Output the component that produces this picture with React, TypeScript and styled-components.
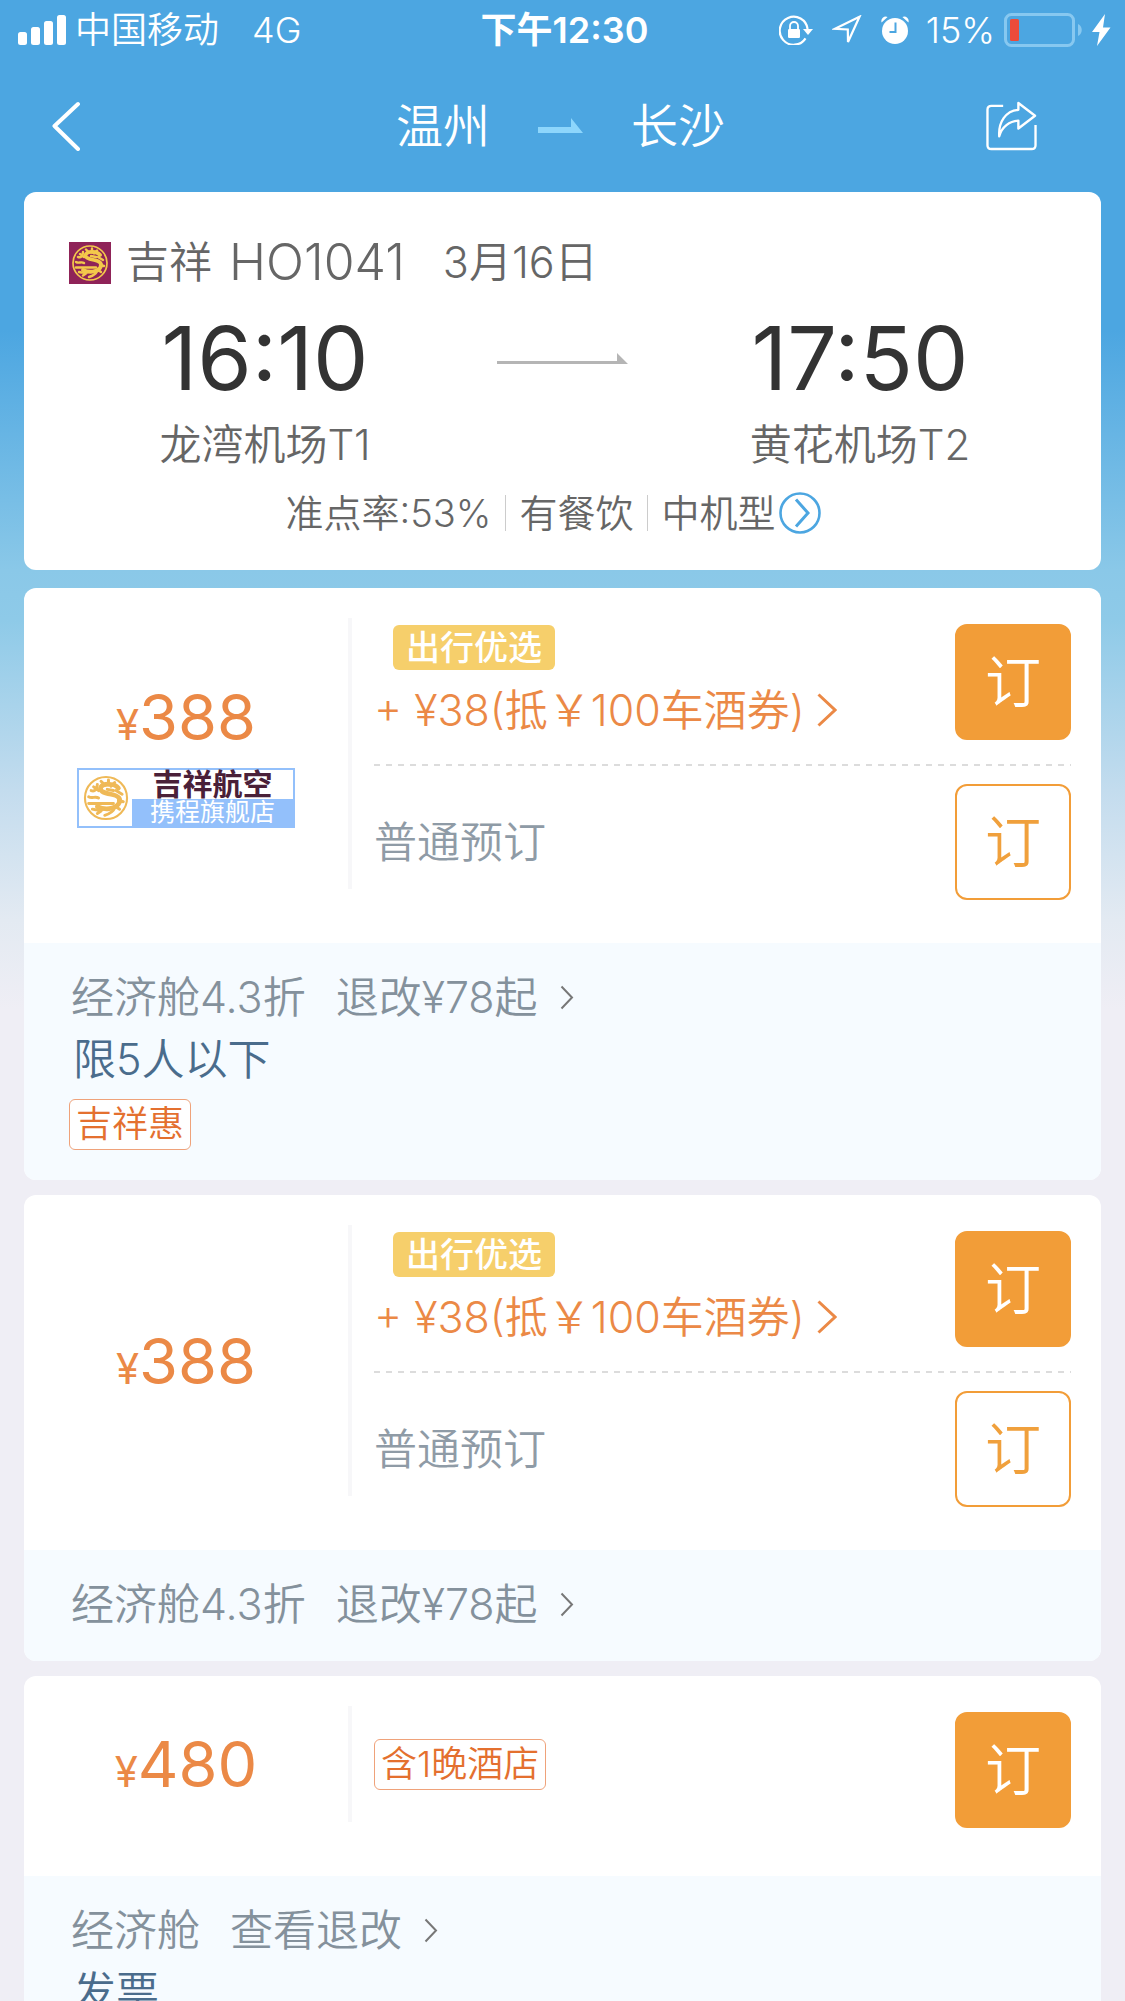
import React from "react";
import styled, { createGlobalStyle } from "styled-components";

const GlobalStyle = createGlobalStyle`
  * { box-sizing: border-box; }
  body {
    margin: 0;
    background: #efeef5;
    font-family: Inter, "Noto Sans CJK SC", sans-serif;
    font-weight: 350;
    -webkit-font-smoothing: antialiased;
  }
  button { font: inherit; padding: 0; cursor: pointer; }
  a { text-decoration: none; color: inherit; }
`;

const Page = styled.div`
  min-height: 100vh;
  padding-bottom: 15px;
  background: #efeef5 linear-gradient(
    180deg,
    #4ca6e1 0px, #4ca6e1 330px, #8ac8e8 570px, #8ecae8 620px,
    #c3dcee 790px, #e3eaf2 920px, #efeef5 1010px
  ) no-repeat;
`;

const StatusBar = styled.div`
  display: grid;
  grid-template-columns: 1fr auto 1fr;
  align-items: center;
  height: 60px;
  padding: 0 14px 0 18px;
  color: #fff;
  font-size: 36px;
  line-height: 60px;
`;

const StatusSide = styled.div<{ $end?: boolean }>`
  display: flex;
  align-items: center;
  justify-content: ${(p) => (p.$end ? "flex-end" : "flex-start")};
  gap: 9px;
`;

const Network = styled.span`
  margin-left: 24px;
`;

const Clock = styled.span`
  font-weight: 600;
`;

const StatusIcons = styled.div`
  display: flex;
  align-items: center;
  gap: 19px;
  margin-right: 8px;
`;

const Header = styled.header`
  display: grid;
  grid-template-columns: 1fr auto 1fr;
  align-items: center;
  height: 132px;
  padding: 0 52px 0 48px;
  color: #fff;
`;

const IconButton = styled.button<{ $end?: boolean }>`
  display: flex;
  justify-self: ${(p) => (p.$end ? "end" : "start")};
  margin-right: ${(p) => (p.$end ? "36px" : "0")};
  border: 0;
  background: none;
  color: inherit;
`;

const Route = styled.h1`
  display: flex;
  align-items: center;
  gap: 48px;
  margin: 0;
  font-size: 47px;
  font-weight: 350;
  line-height: 60px;
`;

const Stack = styled.main`
  display: flex;
  flex-direction: column;
  gap: 15px;
  padding: 0 24px;
`;

const Card = styled.section`
  overflow: hidden;
  border-radius: 12px;
  background: #fff;
`;

const FlightCard = styled(Card)`
  margin-bottom: 3px;
  padding: 40px 45px 30px;
  color: #666;
`;

const FlightName = styled.div`
  display: flex;
  align-items: flex-start;
  height: 60px;
  font-size: 43px;
  line-height: 60px;

  svg { margin-top: 10px; }
`;

const Airline = styled.span`
  margin-left: 15px;
`;

const FlightNumber = styled.span`
  margin: 0 38px 0 17px;
  font-size: 50px;
`;

const Times = styled.div`
  display: grid;
  grid-template-columns: 1fr 131px 1fr;
  gap: 36px;
  padding-top: 6px;
`;

const Stop = styled.div`
  display: flex;
  flex-direction: column;
  align-items: center;
`;

const ArrowCell = styled.div`
  padding-top: 50px;
`;

const Time = styled.span`
  color: #333;
  font-size: 88px;
  font-weight: 400;
  line-height: 120px;
`;

const Airport = styled.span`
  font-size: 42px;
  line-height: 54px;
`;

const Facts = styled.div`
  display: flex;
  align-items: center;
  justify-content: center;
  margin-top: 14px;
  padding-right: 32px;
  font-size: 38px;
  line-height: 54px;
`;

const Fact = styled.span`
  padding: 0 14px;

  & + & {
    background: linear-gradient(#ccc, #ccc) left center / 1px 36px no-repeat;
  }
  &:last-of-type { padding-right: 4px; }
`;

const Upper = styled.div`
  display: grid;
  grid-template-columns: 324px 4px 1fr;
  min-height: 200px;
`;

const PriceColumn = styled.div`
  display: flex;
  flex-direction: column;
  align-items: center;
  justify-content: center;
  gap: 14px;
  padding: 30px 0 54px;
`;

const Price = styled.div`
  color: #eb8946;
  font-size: 63px;
  font-weight: 400;
  line-height: 74px;
`;

const Yen = styled.span`
  font-size: 42px;
  line-height: 1;
`;

const Divider = styled.div`
  margin: 30px 0 54px;
  background: #f7f7f9;
`;

const Store = styled.div`
  display: grid;
  grid-template-columns: 53px 1fr;
  width: 218px;
  height: 60px;
  border: 2px solid #93c0fb;
  background: #fff;
`;

const StoreMark = styled.div`
  display: flex;
  align-items: center;
  justify-content: center;
`;

const StoreText = styled.div`
  display: grid;
  grid-template-rows: 29px 27px;
  text-align: center;
`;

const StoreName = styled.span`
  color: #4a2038;
  font-size: 30px;
  font-weight: 700;
  line-height: 28px;
`;

const StoreKind = styled.span`
  background: #93c0fb;
  color: #fff;
  font-size: 25px;
  font-weight: 400;
  line-height: 26px;
`;

const Options = styled.div`
  padding: 36px 30px 43px 22px;
`;

const Option = styled.div`
  display: flex;
  align-items: center;
  justify-content: space-between;
  height: 116px;

  & + & {
    height: 136px;
    margin-top: 24px;
    padding-top: 20px;
    background: repeating-linear-gradient(90deg, #dcdcdc 0 6px, transparent 6px 12px) top / 100% 2px no-repeat;
  }
`;

const Offer = styled.div`
  display: flex;
  flex-direction: column;
  align-items: flex-start;
  align-self: flex-start;
  gap: 10px;
`;

const HotelOffer = styled.div`
  display: flex;
  align-items: center;
  align-self: flex-start;
  height: 104px;
`;

const Badge = styled.span`
  margin: 1px 0 0 19px;
  padding: 0 13px;
  border-radius: 6px;
  background: #f6cf6b;
  color: #fff;
  font-size: 34px;
  font-weight: 500;
  line-height: 45px;
`;

const Coupon = styled.a`
  display: flex;
  align-items: center;
  gap: 12px;
  color: #eb8946;
  font-size: 43px;
  line-height: 60px;
  white-space: pre;
`;

const Normal = styled.span`
  color: #8f9ba6;
  font-size: 43px;
  line-height: 60px;
`;

const Book = styled.button<{ $outline?: boolean }>`
  width: 116px;
  height: 116px;
  flex: none;
  border: 2px solid #f29d38;
  border-radius: 12px;
  background: ${(p) => (p.$outline ? "#fff" : "#f29d38")};
  color: ${(p) => (p.$outline ? "#f0a03c" : "#fff")};
  font-size: 56px;
  line-height: 112px;
`;

const Tag = styled.span`
  padding: 0 6px;
  border: 1px solid #efa27a;
  border-radius: 6px;
  background: #fff;
  color: #e4702f;
  font-size: 36px;
  line-height: 49px;
`;

const Lower = styled.div`
  display: flex;
  flex-direction: column;
  align-items: flex-start;
  padding: 23px 45px 26px;
  background: #f6fbff;
`;

const Terms = styled.a`
  display: flex;
  align-items: center;
  padding-left: 2px;
  color: #84919c;
  font-size: 43px;
  line-height: 62px;
`;

const TermsRule = styled.span`
  margin: 0 22px 0 30px;
`;

const Note = styled.span`
  padding-left: 4px;
  color: #4a6c8c;
  font-size: 43px;
  line-height: 62px;
`;

const NoteTags = styled.div`
  display: flex;
  margin: 9px 0 4px;
`;

const SignalIcon = () => (
  <svg width="48" height="30" viewBox="0 0 48 30" fill="#fff">
    <rect x="0" y="17" width="9" height="13" rx="2.5" />
    <rect x="13" y="12" width="9" height="18" rx="2.5" />
    <rect x="26" y="6" width="9" height="24" rx="2.5" />
    <rect x="39" y="0" width="9" height="30" rx="2.5" />
  </svg>
);

const LockIcon = () => (
  <svg width="34" height="30" viewBox="0 0 34 30" fill="none">
    <path d="M26.5 23.3A14 14 0 1 1 28.6 14" stroke="#fff" strokeWidth="2.2" />
    <path d="M24 14h10l-5 6z" fill="#fff" />
    <rect x="9" y="14" width="12" height="9" rx="1.2" fill="#fff" />
    <path d="M11 15v-4a4 4 0 0 1 8 0v4" stroke="#fff" strokeWidth="1.8" />
  </svg>
);

const LocationIcon = () => (
  <svg width="30" height="30" viewBox="0 0 30 30" fill="none">
    <path d="M27.5 1.8 3 13.8l12.800.7L16 27z" stroke="#fff" strokeWidth="2.2" />
  </svg>
);

const AlarmIcon = () => (
  <svg width="28" height="28" viewBox="0 0 28 28" fill="none">
    <circle cx="14" cy="15" r="13" fill="#fff" />
    <path d="M.6 6.5a4.5 4.5 0 0 1 6-5.6zM27.4 6.5a4.5 4.5 0 0 0-6-5.6z" fill="#fff" />
    <path d="M14.5 6.5V16H8.500" stroke="#4ca6e1" strokeWidth="2" />
  </svg>
);

const BatteryIcon = () => (
  <svg width="79" height="34" viewBox="0 0 79 34" fill="none">
    <rect x="1.500" y="1.500" width="68" height="31" rx="6" stroke="#87c8f0" strokeWidth="3" />
    <rect x="6" y="6" width="9" height="22" rx="1.500" fill="#ec4b3a" />
    <path d="M74 11v12c5-2 5-10 0-12z" fill="#87c8f0" />
  </svg>
);

const BoltIcon = () => (
  <svg width="19" height="32" viewBox="0 0 19 32" fill="#fff">
    <path d="M13 0 0 18h7.500L5 32l13.500-18.500H11z" />
  </svg>
);

const BackIcon = () => (
  <svg width="34" height="50" viewBox="0 0 34 50" fill="none" stroke="#fff" strokeWidth="4" strokeLinecap="round" strokeLinejoin="round">
    <path d="M30 3 6.500 25 30 48" />
  </svg>
);

const ShareIcon = () => (
  <svg width="51" height="50" viewBox="0 0 52 50" fill="none" stroke="#fff" strokeWidth="2.400" strokeLinejoin="round">
    <path d="M17.500 4.500H5.500Q1.500 4.500 1.500 8.500v36q0 4 4 4h41q4 0 4-4V24" />
    <path d="M33 1.500 50 14.500 33 27.500V19.500C24 20 16 26 13.500 35.500 12.500 21 20 9.500 33 8.500z" />
  </svg>
);

const HeaderArrow = () => (
  <svg width="45" height="16" viewBox="0 0 45 16" fill="#8dd6fc">
    <path d="M0 9h33V0l12 15H0z" />
  </svg>
);

const FlightArrow = () => (
  <svg width="131" height="11" viewBox="0 0 131 11" fill="#b5b5b5">
    <path d="M0 8h120V0l11 11H0z" />
  </svg>
);

const CircleChevron = () => (
  <svg width="42" height="42" viewBox="0 0 42 42" fill="none" stroke="#4ca6e1">
    <circle cx="21" cy="21" r="19.500" strokeWidth="2.600" />
    <path d="M17 7.500 29 21 17 34.500" strokeWidth="3" />
  </svg>
);

const Chevron = ({ w, h, stroke, weight }: { w: number; h: number; stroke: string; weight: number }) => (
  <svg width={w} height={h} viewBox={`0 0 ${w} ${h}`} fill="none" stroke={stroke} strokeWidth={weight}>
    <path d={`M1.500 1.500 L${w - 2} ${h / 2} L1.500 ${h - 1.5}`} />
  </svg>
);

const Phoenix = ({ size, color, ground }: { size: number; color: string; ground?: string }) => (
  <svg width={size} height={size} viewBox="0 0 42 42" fill="none" stroke={color} strokeLinecap="round">
    {ground && <rect width="42" height="42" fill={ground} stroke="none" />}
    <circle cx="21" cy="21" r="17" strokeWidth="1.700" />
    <path d="M31 13c-3-4-12-4-14-1s2 5 8 6 9 4 6 8-11 5-17 2" strokeWidth="3.800" />
    <path d="M9 15c3 1 5-1 5-5M7 20c3 2 5-1 8 1M7 25.500h20M11 12l4 3M17 7.500l3 3M23 6.500v4M28 8.500l-3 3M22 14l5 1M34 18l-5-3M35 24l-4-1M10 30c4 1 6 1 9 0M20 35c3-1 7-3 8-6M14 33.500l3-2M32 30l-3-2" strokeWidth="2.400" />
  </svg>
);

type Fare = {
  price: string;
  store?: boolean;
  packages?: boolean;
  hotel?: string;
  cabin: string;
  rule: string;
  note?: string;
  tag?: string;
};

const fares: Fare[] = [
  { price: "388", store: true, packages: true, cabin: "经济舱4.3折", rule: "退改¥78起", note: "限5人以下", tag: "吉祥惠" },
  { price: "388", packages: true, cabin: "经济舱4.3折", rule: "退改¥78起" },
  { price: "480", hotel: "含1晚酒店", cabin: "经济舱", rule: "查看退改", note: "发票" },
];

const FareCard = ({ fare }: { fare: Fare }) => (
  <Card>
    <Upper>
      <PriceColumn>
        <Price><Yen>¥</Yen>{fare.price}</Price>
        {fare.store && (
          <Store>
            <StoreMark><Phoenix size={52} color="#efb957" /></StoreMark>
            <StoreText>
              <StoreName>吉祥航空</StoreName>
              <StoreKind>携程旗舰店</StoreKind>
            </StoreText>
          </Store>
        )}
      </PriceColumn>
      <Divider />
      <Options>
        {fare.packages && (
          <Option>
            <Offer>
              <Badge>出行优选</Badge>
              <Coupon href="#coupon">
                <span>+ ¥38(抵￥100车酒券)</span>
                <Chevron w={20} h={34} stroke="#eb8946" weight={3} />
              </Coupon>
            </Offer>
            <Book>订</Book>
          </Option>
        )}
        {fare.packages && (
          <Option>
            <Normal>普通预订</Normal>
            <Book $outline>订</Book>
          </Option>
        )}
        {fare.hotel && (
          <Option>
            <HotelOffer><Tag>{fare.hotel}</Tag></HotelOffer>
            <Book>订</Book>
          </Option>
        )}
      </Options>
    </Upper>
    <Lower>
      <Terms href="#terms">
        <span>{fare.cabin}</span>
        <TermsRule>{fare.rule}</TermsRule>
        <Chevron w={14} h={25} stroke="#777" weight={2} />
      </Terms>
      {fare.note && <Note>{fare.note}</Note>}
      {fare.tag && <NoteTags><Tag>{fare.tag}</Tag></NoteTags>}
    </Lower>
  </Card>
);

export default function App() {
  return (
    <Page>
      <GlobalStyle />
      <StatusBar>
        <StatusSide>
          <SignalIcon />
          <span>中国移动</span>
          <Network>4G</Network>
        </StatusSide>
        <Clock>下午12:30</Clock>
        <StatusSide $end>
          <StatusIcons>
            <LockIcon />
            <LocationIcon />
            <AlarmIcon />
          </StatusIcons>
          <span>15%</span>
          <BatteryIcon />
          <BoltIcon />
        </StatusSide>
      </StatusBar>
      <Header>
        <IconButton aria-label="返回"><BackIcon /></IconButton>
        <Route>
          <span>温州</span>
          <HeaderArrow />
          <span>长沙</span>
        </Route>
        <IconButton $end aria-label="分享"><ShareIcon /></IconButton>
      </Header>
      <Stack>
        <FlightCard>
          <FlightName>
            <Phoenix size={42} color="#f3c94b" ground="#8f2358" />
            <Airline>吉祥</Airline>
            <FlightNumber>HO1041</FlightNumber>
            <span>3月16日</span>
          </FlightName>
          <Times>
            <Stop>
              <Time>16:10</Time>
              <Airport>龙湾机场T1</Airport>
            </Stop>
            <ArrowCell><FlightArrow /></ArrowCell>
            <Stop>
              <Time>17:50</Time>
              <Airport>黄花机场T2</Airport>
            </Stop>
          </Times>
          <Facts>
            <Fact>准点率:53%</Fact>
            <Fact>有餐饮</Fact>
            <Fact>中机型</Fact>
            <CircleChevron />
          </Facts>
        </FlightCard>
        {fares.map((fare, i) => <FareCard key={i} fare={fare} />)}
      </Stack>
    </Page>
  );
}
